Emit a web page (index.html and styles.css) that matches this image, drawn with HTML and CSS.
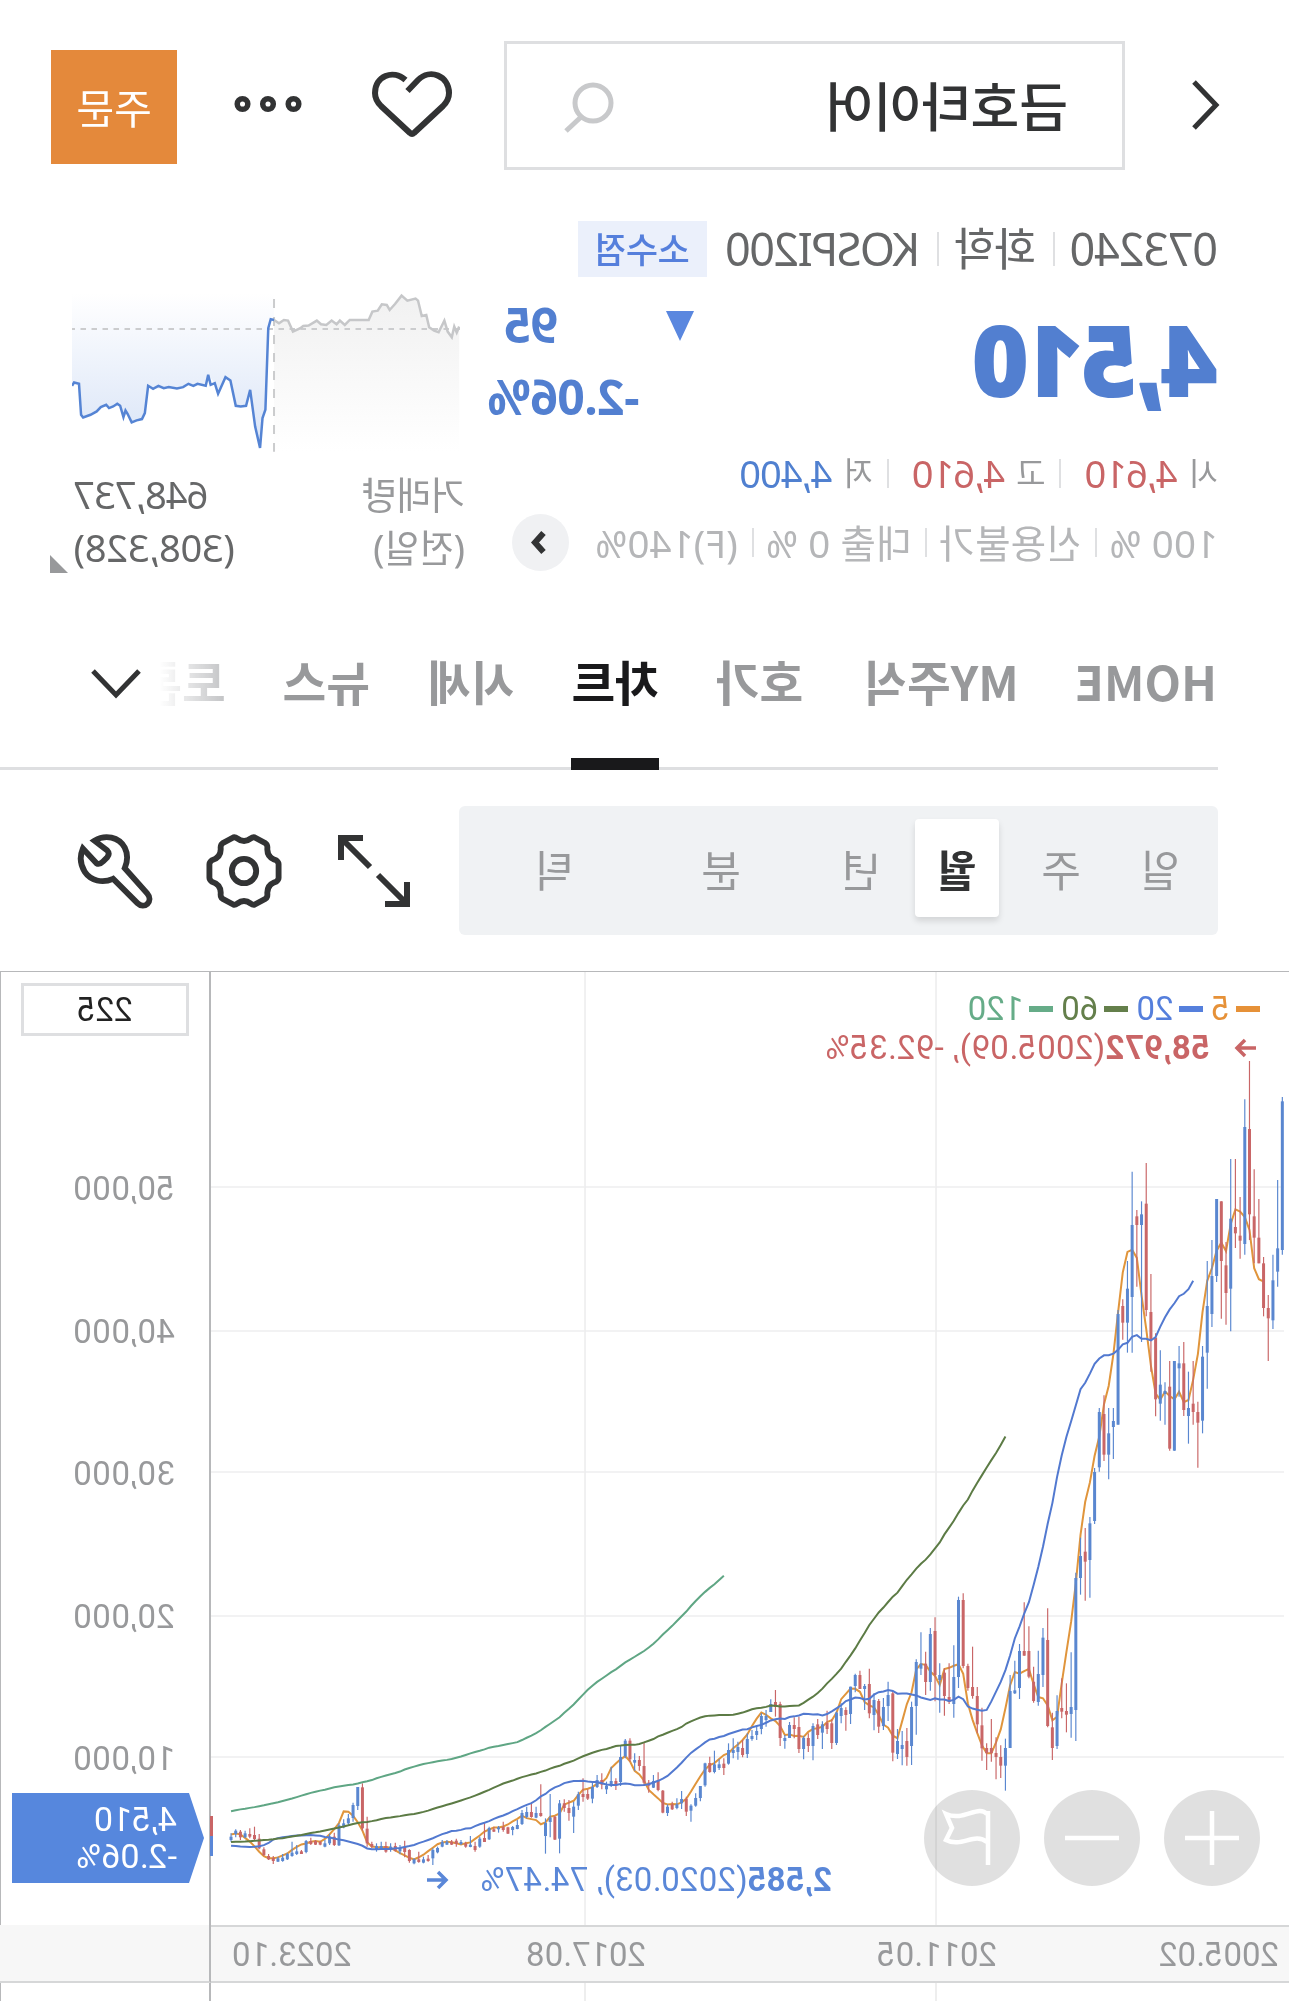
FILE: index.html
```html
<!DOCTYPE html>
<html lang="ko">

<head>
    <meta charset="UTF-8">
    <meta name="viewport" content="width=device-width, initial-scale=1.0">
    <title>금호타이어 차트</title>
    <link rel="stylesheet" href="styles.css">
</head>

<body>
    <div class="app">
        <header class="header">
            <svg class="icon-back" width="32" height="54" viewBox="0 0 32 54"><path d="M27 4L5 27L27 50" /></svg>
            <div class="search-box">
                <span class="stock-name">금호타이어</span>
                <svg class="icon-search" width="54" height="54" viewBox="0 0 54 54"><circle cx="22" cy="22" r="18" /><path d="M34 36L49 50" /></svg>
            </div>
            <svg class="icon-heart" width="80" height="66" viewBox="0 0 80 66"><path d="M44.5 20L34 9C22 -3 3 5 3 22C3 28 5 31 9 35L38 62Q40 64 42 62L71 35C75 31 77 28 77 22C77 5 59 -2 46.500 9" /></svg>
            <svg class="icon-more" width="68" height="18" viewBox="0 0 68 18"><circle cx="8.500" cy="9" r="5.300" /><circle cx="34" cy="9" r="5.300" /><circle cx="59.500" cy="9" r="5.300" /></svg>
            <button class="order-btn">주문</button>
        </header>

        <section class="summary">
            <div class="quote">
                <div class="meta">
                    <span>073240</span><i></i><span>화학</span><i></i><span class="market">KOSPI200</span>
                    <span class="badge">소수점</span>
                </div>
                <div class="price-row">
                    <strong class="price">4,510</strong>
                    <div class="change">
                        <div class="change-top"><span class="down-mark"></span><span>95</span></div>
                        <div>-2.06%</div>
                    </div>
                </div>
                <div class="ohl">
                    <span>시</span><b class="up">4,610</b><i></i>
                    <span>고</span><b class="up">4,610</b><i></i>
                    <span>저</span><b class="down">4,400</b>
                </div>
                <div class="margin-info">
                    <span>100 %</span><i></i><span>신용불가</span><i></i><span>대출 0 %</span><i></i><span>(F)140%</span>
                    <svg class="next" width="57" height="57" viewBox="0 0 57 57"><circle cx="28.500" cy="28.500" r="28.500" /><path d="M25.500 19L34 28.500L25.500 38" /></svg>
                </div>
            </div>
            <div class="volume">
                <svg class="mini-chart" viewBox="0 0 943 490" preserveAspectRatio="none">
                    <defs>
                        <linearGradient id="prevFill" x1="0" y1="0" x2="0" y2="1">
                            <stop offset="0" stop-color="#f1f1f1" />
                            <stop offset="1" stop-color="#ffffff" />
                        </linearGradient>
                        <linearGradient id="todayFill" x1="0" y1="0" x2="0" y2="1">
                            <stop offset="0" stop-color="#ffffff" />
                            <stop offset="1" stop-color="#d9e4f7" />
                        </linearGradient>
                    </defs>
                    <path fill="url(#prevFill)" d="M2 110L8 128L14 110L20 142L30 125L38 92L52 127L63 122L75 112L82 75L93 78L102 32L108 26L128 32L142 17L158 42L171 60L178 45L190 43L200 62L213 65L222 90H268L280 105L292 92L300 103L312 92L325 105L348 92L368 107L388 115L406 125L418 92L440 100L452 90V485H2Z" />
                    <path fill="url(#todayFill)" d="M452 10V90L460 88L466 115L473 360L480 385L486 475L498 410L510 300L520 348L545 348L558 272L570 262L588 312L596 280L612 255L618 288L660 282L688 296L720 295L746 297L758 288L766 370L773 388L798 398L808 372L818 382L826 348L843 350L873 352L898 375L916 383L921 375L926 282L938 278L943 288V10Z" />
                    <path class="dash-h" d="M0 117H943" />
                    <path class="dash-v" d="M452 27V486" />
                    <polyline class="prev-line" points="2,110 8,128 14,110 20,142 30,125 38,92 52,127 63,122 75,112 82,75 93,78 102,32 108,26 128,32 142,17 158,42 171,60 178,45 190,43 200,62 213,65 222,90 268,90 280,105 292,92 300,103 312,92 325,105 338,103 348,92 368,107 381,108 388,115 406,125 418,92 428,90 440,100 452,90" />
                    <polyline class="today-line" points="452,90 460,88 466,115 473,360 480,385 486,475 498,410 510,300 520,348 533,350 545,348 558,272 570,262 588,312 596,280 606,285 612,255 618,288 638,282 648,288 660,282 673,292 688,296 708,292 720,295 733,288 746,297 758,288 766,370 773,388 786,392 798,398 808,372 813,362 818,382 826,348 833,342 843,350 853,355 860,345 873,352 883,365 898,375 916,383 921,375 926,282 938,278 943,288" />
                </svg>
                <div class="volume-row"><span>거래량</span><em>648,737</em></div>
                <div class="volume-row"><span>(전일)</span><em>(308,328)</em></div>
                <span class="corner"></span>
            </div>
        </section>

        <nav class="tabs">
            <a>HOME</a><a>MY주식</a><a>호가</a><a class="active">차트</a><a>시세</a><a>뉴스</a><a class="faded">토론</a>
            <svg class="icon-down" width="52" height="32" viewBox="0 0 52 32"><path d="M3 4L26 28L49 4" /></svg>
        </nav>

        <div class="toolbar">
            <div class="periods">
                <span>일</span><span>주</span><span class="selected">월</span><span>년</span><span>분</span><span>틱</span>
            </div>
            <svg class="icon-expand" width="74" height="74" viewBox="0 0 74 74"><path d="M48 4H70V26M69 5L41 33M26 70H4V48M5 69L33 41" /></svg>
            <svg class="icon-gear" width="76" height="76" viewBox="0 0 78 78"><circle cx="39" cy="39" r="12.500" /><path d="M28 4.500Q30 4 32 5.500Q39 11 46 5.500Q48 4 50 4.500L61 10.500Q63 12 63 15Q62 25 72 28Q74.500 30 74.500 32V46Q74.500 48 72 50Q62 53 63 63Q63 66 61 67.500L50 73.500Q48 74 46 72.500Q39 67 32 72.500Q30 74 28 73.500L17 67.500Q15 66 15 63Q16 53 6 50Q3.500 48 3.500 46V32Q3.500 30 6 28Q16 25 15 15Q15 12 17 10.500Z" /></svg>
            <svg class="icon-wrench" width="76" height="76" viewBox="0 0 78 78"><path d="M60 8C49 1 35 4 29 15C26 21 26 29 29 36L6 62C-1 70 9 79 16 72L41 47C52 52 64 49 70 40C75 32 75 23 72 16L58 31Q55 33 51 29L47 25Q44 21 47 18Z" /></svg>
        </div>

        <section class="chart">
            <div class="plot">
                <svg class="candles" id="candles" viewBox="0 36 3234 2859"></svg>
                <div class="legend">
                    <span class="ma5">5</span><span class="ma20">20</span><span class="ma60">60</span><span class="ma120">120</span>
                </div>
                <div class="note high">
                    <svg width="22" height="20" viewBox="0 0 22 20"><path d="M0 10H19M11 2L19 10L11 18" /></svg>
                    <span><b>58,972</b>(2005.09), -92.35%</span>
                </div>
                <div class="note low">
                    <span><b>2,585</b>(2020.03), 74.47%</span>
                    <svg width="22" height="20" viewBox="0 0 22 20"><path d="M22 10H3M11 2L3 10L11 18" /></svg>
                </div>
                <div class="zoom-btns">
                    <svg viewBox="0 0 96 96"><path d="M21 48H75M48 21V75" /></svg>
                    <svg viewBox="0 0 96 96"><path d="M21 48H75" /></svg>
                    <svg viewBox="0 0 96 96"><path d="M32 21V75M33 24C42 14 56 32 74 24L68 38L74 50C58 58 46 42 33 52" /></svg>
                </div>
            </div>
            <div class="price-axis">
                <div class="count">225</div>
                <span>50,000</span><span>40,000</span><span>30,000</span><span>20,000</span><span>10,000</span>
                <div class="now">4,510<br>-2.06%</div>
                <div class="now-bar"></div>
            </div>
            <div class="date-axis">
                <span>2005.02</span><span>2011.05</span><span>2017.08</span><span>2023.10</span>
            </div>
            <div class="axis-corner"></div>
            <div class="next-pane"></div>
            <div class="next-axis"></div>
        </section>
    </div>

    <script src="chart.js"></script>
</body>

</html>
```

FILE: styles.css
```css
* {
    box-sizing: border-box;
}

body {
    margin: 0;
    background-color: #fff;
    font-family: 'Noto Sans CJK KR', 'Noto Sans', sans-serif;
    color: #323334;
}

/* 좌우 반전 화면 */
.app {
    width: 1289px;
    height: 2001px;
    overflow: hidden;
    transform: scaleX(-1);
}

svg {
    display: block;
    flex: none;
    fill: none;
    stroke: #323334;
    stroke-width: 6;
}

i {
    width: 2px;
    flex: none;
    background-color: #dfe0e2;
}

.header {
    display: flex;
    align-items: center;
    height: 129px;
    margin-top: 41px;
    padding-left: 68px;
}

.icon-back {
    margin-top: -2px;
    stroke-width: 5;
}

.search-box {
    display: flex;
    align-items: center;
    justify-content: space-between;
    width: 621px;
    height: 129px;
    margin-left: 64px;
    padding: 0 54px 0 54px;
    border: 3px solid #dedfe1;
}

.stock-name {
    font-size: 53px;
    font-weight: 500;
    line-height: 1;
    margin-top: -3px;
}

.icon-search {
    stroke: #c8c9cb;
    stroke-width: 5;
    margin-top: 5px;
}

.icon-heart {
    margin-top: -4px;
    margin-left: 52px;
}

.icon-more {
    margin-top: -4px;
    margin-left: 70px;
    stroke-width: 5.500;
}

.order-btn {
    width: 126px;
    height: 114px;
    margin-top: 3px;
    margin-left: 57px;
    padding: 0 0 3px;
    border: 0;
    background-color: #e4893b;
    color: #fff;
    font-family: inherit;
    font-size: 41px;
}

.summary {
    display: grid;
    grid-template-columns: 758px 390px;
    height: 430px;
    padding: 51px 0 0 71px;
    font-family: 'Noto Sans', 'Noto Sans CJK KR', sans-serif;
}

.meta {
    display: flex;
    align-items: center;
    height: 56px;
    font-size: 45px;
    letter-spacing: -1.200px;
    line-height: 56px;
    color: #666768;
}

.meta i {
    height: 34px;
    margin: 0 17px 0 16px;
}

.market {
    letter-spacing: -1.600px;
}

.badge {
    width: 129px;
    height: 56px;
    margin-left: 20px;
    background-color: #ebf0fb;
    color: #557fdc;
    font-family: 'Noto Sans CJK KR', sans-serif;
    font-size: 35px;
    font-weight: 500;
    letter-spacing: -0.500px;
    line-height: 54px;
    text-align: center;
}

.price-row {
    display: flex;
    height: 162px;
    color: #527fd0;
    font-weight: bold;
}

.price {
    width: 524px;
    font-size: 99px;
    letter-spacing: -4px;
    line-height: 164px;
}

.change {
    width: 206px;
    padding-top: 12px;
    font-size: 48px;
    line-height: 72px;
    text-align: right;
    letter-spacing: -0.500px;
}

.change-top {
    display: flex;
    justify-content: space-between;
    padding-right: 16px;
}

.down-mark {
    width: 28px;
    height: 30px;
    margin-top: 22px;
    background-color: #5a87df;
    clip-path: polygon(0 0, 100% 0, 50% 100%);
}

.ohl {
    display: flex;
    align-items: center;
    height: 70px;
    padding-bottom: 2px;
    font-size: 38px;
    line-height: 68px;
    color: #98999b;
}

.ohl span {
    font-size: 32px;
}

.ohl b {
    font-weight: 400;
    margin-left: 11px;
    letter-spacing: -1px;
}

.ohl i {
    height: 29px;
    margin: 0 14px 0 24px;
}

.up {
    color: #c96566;
}

.down {
    color: #5080d0;
}

.margin-info {
    display: flex;
    align-items: center;
    height: 70px;
    padding-bottom: 3px;
    font-size: 38.500px;
    letter-spacing: 0.100px;
    line-height: 66px;
    color: #b5b6b8;
    white-space: nowrap;
}

.margin-info i {
    height: 29px;
    margin: 0 14px 0 12px;
}

.next {
    margin-left: 26px;
}

.next circle {
    fill: #f0f1f3;
    stroke: none;
}

.volume {
    position: relative;
    padding-top: 69px;
}

.mini-chart {
    width: 388px;
    height: 163px;
}

.mini-chart path {
    stroke: none;
}

.mini-chart .dash-h,
.mini-chart .dash-v {
    stroke: #cbccce;
    stroke-width: 2;
    stroke-dasharray: 5.500 5.500;
    vector-effect: non-scaling-stroke;
}

.mini-chart .dash-v {
    stroke-dasharray: 9;
}

.prev-line,
.today-line {
    stroke: #c6c7c9;
    stroke-width: 2.500;
    vector-effect: non-scaling-stroke;
}

.today-line {
    stroke: #5584d4;
}

.volume-row {
    display: flex;
    justify-content: space-between;
    width: 391px;
    height: 53px;
    margin: 15px 0 0 -5px;
    font-size: 38px;
    letter-spacing: -0.900px;
    line-height: 53px;
    color: #98999b;
}

.volume-row + .volume-row {
    margin-top: 0;
    letter-spacing: -0.300px;
}

.volume-row em {
    font-style: normal;
    color: #666768;
}

.corner {
    position: absolute;
    right: -20px;
    top: 334px;
    width: 18px;
    height: 18px;
    background-color: #98999b;
    clip-path: polygon(100% 0, 100% 100%, 0 100%);
}

.tabs {
    display: flex;
    height: 170px;
    margin-left: 71px;
    padding-left: 1px;
    border-bottom: 3px solid #dedfe1;
    font-size: 47.500px;
    font-weight: bold;
    line-height: 162px;
    color: #98999b;
    white-space: nowrap;
}

.tabs a {
    height: 170px;
    margin-right: 57px;
}

.tabs a:nth-child(1) {
    margin-right: 56px;
}

.tabs a:nth-child(2) {
    margin-right: 60px;
}

.tabs .active {
    color: #19191b;
    border-bottom: 12px solid #19191b;
}

.tabs .faded {
    margin-right: 0;
    color: transparent;
    background-image: linear-gradient(to right, #c2c3c5, transparent 76%);
    background-clip: text;
    -webkit-background-clip: text;
}

.icon-down {
    margin-top: 67px;
    margin-left: -4px;
    stroke-width: 5;
}

.toolbar {
    display: flex;
    align-items: center;
    height: 201px;
    padding-left: 71px;
}

.periods {
    display: grid;
    grid-template-columns: 116px 82px 126px 67px 212px 122px;
    align-items: center;
    width: 759px;
    height: 129px;
    border-radius: 6px;
    background-color: #f0f2f4;
    font-size: 43px;
    line-height: 98px;
    text-align: center;
    color: #98999b;
}

.periods span {
    margin-top: -6px;
}

.periods .selected {
    width: 84px;
    height: 98px;
    margin-top: -6px;
    justify-self: center;
    border-radius: 4px;
    background-color: #fff;
    box-shadow: 0 4px 6px rgba(0, 0, 0, 0.12);
    font-weight: bold;
    line-height: 98px;
    color: #323334;
}

.icon-expand {
    margin-left: 48px;
}

.icon-gear {
    margin-left: 55px;
}

.icon-wrench {
    margin-left: 53px;
}

.chart {
    display: grid;
    grid-template-columns: 1078px 211px;
    grid-template-rows: 953px 58px 19px;
    border-top: 1px solid #b7b8ba;
    border-right: 1px solid #b7b8ba;
    font-family: Roboto, 'Liberation Sans', sans-serif;
    font-size: 33px;
    color: #98999b;
}

.plot {
    position: relative;
}

.candles {
    width: 1078px;
    height: 953px;
}

.legend {
    position: absolute;
    left: 29px;
    top: 17px;
    display: flex;
    gap: 8px;
    line-height: 40px;
}

.legend span {
    display: flex;
    align-items: center;
    gap: 6px;
}

.legend span::before {
    content: '';
    width: 24px;
    height: 6px;
    background-color: currentColor;
}

.ma5 {
    color: #e69138;
}

.ma20 {
    color: #557fdc;
}

.ma60 {
    color: #647f4b;
}

.ma120 {
    color: #66ac88;
}

.note {
    position: absolute;
    display: flex;
    align-items: center;
    gap: 24px;
    letter-spacing: 0.350px;
    line-height: 40px;
    white-space: nowrap;
}

.note svg {
    stroke: currentColor;
    stroke-width: 3.500;
}

.high {
    left: 33px;
    top: 56px;
    color: #c96566;
}

.low {
    left: 457px;
    top: 888px;
    gap: 31px;
    letter-spacing: 0.150px;
    color: #5a87d8;
}

.zoom-btns {
    position: absolute;
    left: 29px;
    top: 818px;
    display: flex;
    gap: 24px;
}

.zoom-btns svg {
    width: 96px;
    height: 96px;
    border-radius: 50%;
    background-color: rgba(0, 0, 0, 0.12);
    stroke: #fff;
    stroke-width: 4.500;
}

.price-axis {
    position: relative;
    display: flex;
    flex-direction: column;
    border-left: 2px solid #b7b8ba;
    padding: 11px 0 0 20px;
}

.count {
    width: 168px;
    height: 53px;
    margin-bottom: 80px;
    border: 3px solid #dedfe1;
    line-height: 48px;
    text-align: center;
    color: #222;
}

.price-axis span {
    height: 142.500px;
    margin-left: 14px;
    letter-spacing: 0.500px;
    line-height: 146px;
}

.now {
    position: absolute;
    left: 5px;
    top: 821px;
    width: 192px;
    height: 90px;
    padding: 8px 0 0 27px;
    background-color: #5687dd;
    clip-path: polygon(0 50%, 15px 0, 100% 0, 100% 100%, 15px 100%);
    font-size: 34px;
    line-height: 37px;
    color: #fff;
}

.now-bar {
    position: absolute;
    left: -4px;
    top: 844px;
    width: 3px;
    height: 40px;
    background-image: linear-gradient(#c96566 50%, #5a87d8 50%);
}

.date-axis,
.axis-corner {
    background-color: #f7f7f7;
    border-bottom: 2px solid #d6d7d8;
}

.date-axis {
    display: flex;
    border-top: 2px solid #d6d7d8;
    padding-left: 10px;
    line-height: 55px;
}

.date-axis span:nth-child(2) {
    margin-left: 162px;
}

.date-axis span:nth-child(3) {
    margin-left: 231px;
}

.date-axis span:nth-child(4) {
    margin-left: 174px;
}

.axis-corner,
.next-axis {
    border-left: 2px solid #b7b8ba;
}

.next-pane {
    background-image: linear-gradient(#eee, #eee), linear-gradient(#eee, #eee);
    background-size: 2px 100%;
    background-position: 352px 0, 703px 0;
    background-repeat: no-repeat;
}
```

FILE: chart.js
```js
// [방향, 고가, 몸통 위, 몸통 아래, 저가] : y좌표 (3배율)
const D = 'down';
const U = 'up';
const candles = [
    [D,411,424,870,884],[D,660,865,935,980],[D,884,961,1081,1107],[U,1005,1044,1075,1203],[U,891,910,1044,1069],
    [U,717,833,910,910],[U,628,769,833,910],[U,303,507,763,840],[D,418,501,852,884],[U,711,827,842,896],
    [U,597,801,820,864],[D,597,776,986,1114],[U,846,916,999,1094],[U,724,724,903,1076],[D,717,717,948,966],
    [D,840,948,1062,1101],[D,903,1038,1178,1286],[D,1158,1190,1382,1420],[U,1325,1356,1388,1523],[U,1203,1331,1356,1394],
    [D,1235,1344,1368,1451],[U,1146,1210,1350,1368],[D,1158,1210,1225,1310],[D,1203,1203,1472,1472],[U,1203,1280,1466,1472],
    [D,1267,1293,1302,1394],[D,1171,1274,1331,1382],[U,1120,1133,1318,1369],[U,942,1056,1140,1235],[U,609,731,1050,1069],
    [D,724,763,795,1146],[U,750,769,795,980],[D,635,795,1011,1178],[D,903,986,1088,1178],[U,1018,1038,1088,1139],
    [D,1050,1062,1394,1394],[D,1344,1383,1401,1497],[D,1344,1420,1484,1558],[U,1306,1362,1484,1503],[D,1344,1356,1522,1535],
    [D,1524,1536,1683,1692],[D,1671,1690,1800,1913],[U,1704,1775,1805,1922],[D,1733,1788,1854,1904],[D,1838,1854,2250,2343],
    [D,2077,2241,2262,2333],[U,2170,2253,2264,2317],[U,2155,2244,2255,2275],[D,2206,2253,2358,2367],[U,2258,2302,2364,2400],
    [U,1945,2040,2298,2302],[D,2004,2033,2145,2181],[D,2072,2142,2226,2237],[U,2120,2165,2223,2228],[U,1999,2073,2150,2155],
    [U,1927,2073,2087,2087],[D,2052,2073,2184,2217],[D,2102,2191,2200,2202],[D,2145,2193,2364,2364],[D,2336,2364,2417,2492],
    [U,2356,2391,2417,2454],[U,2332,2379,2391,2458],[U,2277,2364,2379,2405],[U,2350,2364,2379,2430],[U,2243,2296,2365,2402],
    [U,2181,2208,2293,2320],[U,2060,2181,2208,2216],[U,2111,2118,2184,2192],[U,1900,1920,2118,2125],[D,1910,1920,2151,2184],
    [D,2056,2151,2232,2273],[U,2110,2211,2226,2232],[U,2125,2138,2208,2267],[D,2110,2145,2160,2258],[U,1972,2013,2145,2224],
    [D,2004,2022,2166,2192],[U,2075,2111,2166,2205],[D,2017,2111,2126,2145],[D,2098,2106,2238,2324],[D,2225,2241,2358,2415],
    [U,2304,2343,2391,2417],[D,2313,2355,2367,2416],[D,2307,2343,2382,2397],[U,2195,2200,2378,2404],[D,2165,2205,2238,2283],
    [D,2214,2241,2298,2310],[U,2217,2223,2300,2319],[D,2200,2220,2265,2311],[U,2126,2172,2260,2275],[D,2172,2178,2187,2250],
    [U,2132,2145,2187,2187],[D,2141,2145,2178,2197],[D,2180,2180,2262,2292],[U,2242,2250,2265,2312],[D,2230,2244,2268,2290],
    [D,2255,2258,2349,2355],[U,2278,2290,2349,2367],[U,2252,2289,2307,2322],[D,2284,2293,2318,2367],[U,2277,2293,2325,2337],
    [D,2290,2298,2358,2401],[U,2320,2334,2358,2376],[D,2328,2334,2367,2398],[U,2270,2301,2367,2379],[U,2272,2295,2307,2335],
    [D,2286,2295,2334,2334],[D,2325,2334,2343,2366],[U,2225,2232,2334,2358],[U,2190,2226,2241,2270],[D,2218,2232,2256,2256],
    [D,2250,2268,2280,2300],[D,2260,2268,2307,2323],[D,2295,2313,2325,2340],[D,2310,2328,2337,2342],[D,2320,2337,2382,2394],
    [U,2340,2364,2385,2392],[D,2345,2361,2376,2399],[D,2335,2370,2379,2395],[D,2350,2370,2411,2414],[U,2395,2411,2424,2445],
    [D,2398,2413,2424,2430],[D,2372,2413,2436,2440],[U,2390,2409,2436,2438],[D,2408,2410,2476,2480],[D,2478,2478,2514,2524],
    [D,2500,2514,2537,2540],[D,2533,2537,2552,2585],[U,2510,2517,2555,2568],[D,2493,2517,2530,2547],[D,2515,2533,2544,2548],
    [U,2525,2533,2548,2550],[D,2533,2540,2559,2568],[U,2490,2492,2558,2560],[U,2437,2463,2490,2494],[D,2445,2463,2483,2484],
    [U,2460,2468,2477,2498],[U,2345,2418,2468,2477],[U,2388,2400,2418,2432],[D,2380,2400,2408,2432],[U,2335,2342,2398,2405],
    [D,2337,2342,2389,2395],[D,2358,2391,2466,2478],[U,2455,2463,2477,2490],[D,2420,2463,2477,2481],[D,2465,2477,2488,2502],
    [U,2440,2460,2474,2488],[D,2445,2460,2481,2484],[D,2464,2481,2516,2530],[U,2488,2502,2516,2520],[U,2455,2502,2511,2525],
    [D,2495,2503,2537,2550],[D,2525,2540,2570,2619],[U,2520,2544,2559,2582],[U,2518,2530,2544,2555],[D,2520,2530,2636,2680],
    [U,2568,2570,2639,2640],[D,2502,2573,2586,2632],[D,2575,2589,2628,2681],[U,2473,2559,2568,2570],[D,2540,2559,2573,2575],
    [U,2530,2556,2571,2573],[D,2540,2556,2571,2575],[D,2550,2559,2592,2595],[D,2580,2595,2607,2608],[D,2598,2601,2610,2626],
    [U,2600,2602,2621,2622],[U,2585,2601,2610,2615],[D,2598,2602,2608,2618],[U,2600,2608,2615,2616],[D,2600,2604,2638,2640],
    [U,2588,2634,2646,2646],[D,2630,2636,2660,2663],[U,2645,2658,2670,2675],[D,2628,2654,2661,2662],[U,2645,2650,2660,2663],
    [D,2640,2646,2652,2655],[U,2636,2642,2652,2660],[U,2640,2645,2654,2655],[D,2640,2645,2654,2655],[D,2640,2646,2660,2662],
    [D,2660,2664,2677,2680],[D,2665,2670,2695,2715],[U,2685,2696,2703,2705],[D,2690,2698,2708,2710],[U,2675,2698,2706,2708],
    [D,2695,2698,2710,2713],[U,2668,2670,2703,2708],[U,2642,2660,2676,2692],[D,2655,2664,2674,2683],[U,2648,2658,2672,2675],
    [D,2650,2660,2670,2675],[U,2645,2658,2675,2678],[D,2645,2658,2664,2668],[D,2650,2658,2670,2675],[U,2645,2652,2660,2664],
    [U,2570,2606,2650,2660],[U,2470,2482,2605,2612],[D,2481,2481,2538,2550],[D,2528,2535,2574,2585],[D,2562,2575,2590,2594],
    [D,2578,2590,2602,2605],[D,2590,2596,2656,2658],[U,2618,2630,2655,2658],[D,2622,2630,2650,2655],[D,2640,2650,2660,2662],
    [U,2642,2646,2654,2656],[U,2640,2643,2654,2655],[U,2633,2643,2652,2655],[D,2640,2643,2676,2680],[U,2670,2674,2682,2682],
    [D,2655,2674,2682,2685],[D,2645,2678,2688,2690],[D,2678,2682,2698,2700],[D,2682,2693,2703,2705],[D,2690,2695,2705,2706],
    [U,2688,2694,2703,2712],[U,2682,2688,2698,2700],[U,2662,2668,2685,2688],[U,2622,2636,2665,2668],[U,2600,2625,2637,2640],
    [U,2605,2622,2630,2635],[D,2612,2620,2632,2634],[U,2610,2615,2632,2640],[D,2608,2612,2622,2632],[D,2620,2630,2640,2645]
];

const colors = { down: '#5a87d0', up: '#c96667' };
const x = i => 20 + 14.08 * i;
const close = c => c[0] === D ? c[3] : c[2];

// 이동평균선
function average(days, color) {
    const points = [];
    for (let i = days - 1; i < candles.length; i++) {
        const sum = candles.slice(i - days + 1, i + 1).reduce((s, c) => s + close(c), 0);
        points.push(x(i).toFixed(1) + ',' + (sum / days - 3).toFixed(1));
    }
    return `<polyline points="${points.join(' ')}" stroke="${color}" stroke-width="6"/>`;
}

let html = '';
[681, 1113, 1536, 1968, 2391].forEach(y => {
    html += `<path d="M15 ${y}H3237" stroke="#eeeeef" stroke-width="5"/>`;
});
[1059, 2112].forEach(v => {
    html += `<path d="M${v} 36V2895" stroke="#eeeeef" stroke-width="5"/>`;
});
html += average(5, '#e0953c');
candles.forEach(([dir, high, top, bottom, low], i) => {
    html += `<path d="M${x(i)} ${high}V${low}" stroke="${colors[dir]}" stroke-width="3.500"/>`;
    html += `<path d="M${x(i)} ${top}V${bottom}" stroke="${colors[dir]}" stroke-width="9"/>`;
});
html += average(20, '#5279d0') + average(60, '#5c7b45') + average(120, '#5fa684');
document.getElementById('candles').innerHTML = html;
```
